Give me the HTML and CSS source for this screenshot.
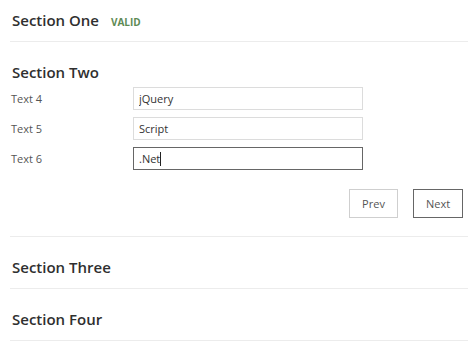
FILE: index.html
```html
<!DOCTYPE html>
<html>
<head>
<meta charset="utf-8">
<link rel="stylesheet" href="styles.css">
</head>
<body>
<div class="accordion">
  <section class="section first">
    <h2 class="section-head">Section One <span class="badge">VALID</span></h2>
  </section>
  <section class="section open">
    <h2 class="section-head">Section Two</h2>
    <div class="form">
      <label class="field-label">Text 4</label>
      <div class="field"><input class="input" type="text" value="jQuery"></div>
      <label class="field-label">Text 5</label>
      <div class="field"><input class="input" type="text" value="Script"></div>
      <label class="field-label">Text 6</label>
      <div class="field"><input class="input active" type="text" value=".Net"><span class="caret"></span></div>
    </div>
    <div class="actions">
      <button class="btn">Prev</button>
      <button class="btn primary">Next</button>
    </div>
  </section>
  <section class="section">
    <h2 class="section-head">Section Three</h2>
  </section>
  <section class="section">
    <h2 class="section-head">Section Four</h2>
  </section>
</div>
</body>
</html>
```
FILE: styles.css
```css
* { box-sizing: border-box; }
body {
  margin: 0;
  background: #fff;
  font-family: "Open Sans", "Liberation Sans", sans-serif;
  color: #333;
}
.accordion {
  padding: 0 6px 0 10px;
}
.section {
  border-bottom: 1px solid #ececec;
  padding: 20px 0 11px;
}
.section.first {
  padding-top: 10px;
}
.section.open {
  padding-bottom: 18px;
}
.section-head {
  margin: 0;
  padding-left: 2px;
  height: 20px;
  font-size: 15px;
  font-weight: 600;
  line-height: 20px;
  color: #2f2f2f;
}
.badge {
  margin-left: 8px;
  font-size: 10px;
  font-weight: 700;
  line-height: 1;
  color: #5e8a55;
}
.form {
  margin-top: 5px;
  display: grid;
  grid-template-columns: 123px 230px;
  row-gap: 7px;
  align-items: center;
}
.field-label {
  padding-left: 1px;
  font-size: 11px;
  color: #555;
}
.field {
  position: relative;
  height: 23px;
}
.input {
  display: block;
  width: 230px;
  height: 23px;
  margin: 0;
  padding: 0 5px;
  border: 1px solid #dcdcdc;
  font-family: "Open Sans", "Liberation Sans", sans-serif;
  font-size: 11px;
  color: #333;
  background: #fff;
  outline: none;
}
.input.active {
  border-color: #666;
}
.caret {
  position: absolute;
  left: 27px;
  top: 5px;
  width: 1px;
  height: 14px;
  background: #222;
}
.actions {
  margin-top: 19px;
  display: flex;
  justify-content: flex-end;
  gap: 15px;
  padding-right: 5px;
}
.btn {
  height: 29px;
  width: 49px;
  padding: 0;
  background: #fff;
  border: 1px solid #cfcfcf;
  font-family: "Open Sans", "Liberation Sans", sans-serif;
  font-size: 11px;
  color: #555;
}
.btn.primary {
  width: 50px;
  border-color: #666;
}
```
